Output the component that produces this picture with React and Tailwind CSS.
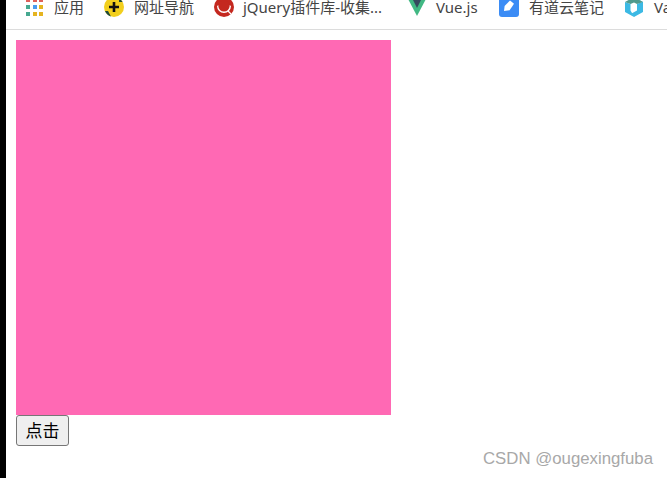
function AppsIcon() {
  const colors = ['#e0605a', '#e0605a', '#e0605a', '#46a890', '#4a9bf0', '#e5b420', '#46a890', '#e5b420', '#e5b420'];
  return (
    <div className="grid grid-cols-3 gap-x-[2.5px] gap-y-[3px] w-[17px] mt-[-1px]">
      {colors.map((c, i) => (
        <span key={i} className="w-[4px] h-[4px]" style={{ background: c }} />
      ))}
    </div>
  );
}

function NavIcon() {
  return (
    <svg width="20" height="20" viewBox="0 0 20 20">
      <circle cx="10" cy="10" r="10" fill="#f2cf1d" />
      <path d="M1 14a10 10 0 0 0 6 5.5L4 14z" fill="#1f4a38" />
      <path d="M15 1.4a10 10 0 0 1 3.6 3.6L15 5z" fill="#1f4a38" />
      <path d="M10 5v10M5 10h10" stroke="#111" strokeWidth="2.6" />
    </svg>
  );
}

function JqueryIcon() {
  return (
    <svg width="20" height="20" viewBox="0 0 20 20">
      <circle cx="10" cy="10" r="10" fill="#c4281f" />
      <path d="M3 9a7 7 0 0 0 14 0l-1.6-1a5.4 5.4 0 0 1-10.8 0z" fill="#fff" />
      <circle cx="10" cy="9" r="5.6" fill="#c4281f" />
      <path d="M14 14l3 3" stroke="#fff" strokeWidth="1.2" />
    </svg>
  );
}

function VueIcon() {
  return (
    <svg width="20" height="20" viewBox="0 0 20 20">
      <path d="M0 0h20L10 19z" fill="#41b883" />
      <path d="M4.5 0h11L10 11z" fill="#35495e" />
    </svg>
  );
}

function NoteIcon() {
  return (
    <svg width="20" height="20" viewBox="0 0 20 20">
      <rect width="20" height="20" rx="3" fill="#3b8cf5" />
      <path d="M5 14l.6-5L11 3.6l4 3.2-4.4 6.4z" fill="#fff" />
    </svg>
  );
}

function HexIcon() {
  return (
    <svg width="18" height="20" viewBox="0 0 18 20">
      <path d="M9 0l9 5v10l-9 5-2.5-3.5L12 13.5V7l5-2z" fill="#3cb9e4" />
      <path d="M0 5l5.5 2v6.5L7 16l2 4-9-5z" fill="#3cb9e4" />
      <path d="M9 0L0 5l5.5 2L9 5.5 12 7l6-2z" fill="#4f9a8d" />
    </svg>
  );
}

function Bookmark({ icon, label, className }) {
  return (
    <div className={`flex items-center shrink-0 whitespace-nowrap h-[20px] mt-[-3px] ${className}`}>
      {icon}
      <span className="text-[15px] leading-[14px] text-[#444444]">{label}</span>
    </div>
  );
}

export default function App() {
  return (
    <div className="relative flex h-[478px] w-[667px] overflow-hidden bg-white font-['Noto_Sans','Noto_Sans_CJK_SC',sans-serif]">
      <div className="w-[6px] bg-black shrink-0" />
      <div className="flex-1 min-w-0 overflow-hidden">
        {/* Bookmarks bar */}
        <div className="flex items-start h-[30px] pl-[20px] border-b border-[#dcdcdc] overflow-hidden">
          <Bookmark className="gap-[11px] w-[78px]" icon={<AppsIcon />} label="应用" />
          <Bookmark className="gap-[10px] w-[110px]" icon={<NavIcon />} label="网址导航" />
          <Bookmark className="gap-[9px] w-[193px]" icon={<JqueryIcon />} label="jQuery插件库-收集..." />
          <Bookmark className="gap-[9px] w-[92px]" icon={<VueIcon />} label="Vue.js" />
          <Bookmark className="gap-[10px] w-[126px]" icon={<NoteIcon />} label="有道云笔记" />
          <Bookmark className="gap-[11px]" icon={<HexIcon />} label="Va" />
        </div>

        {/* Page */}
        <div className="pl-[10px] pt-[10px]">
          <div className="w-[375px] h-[375px] bg-[#ff69b4]" />
          <button className="block h-[31px] w-[53px] bg-[#efefef] border border-[#767676] rounded-[3px] text-[17px] text-black leading-none">
            点击
          </button>
        </div>
      </div>

      {/* Watermark */}
      <span className="absolute left-[483px] top-[449px] text-[16.8px] leading-[20px] font-['Liberation_Sans',sans-serif] text-[#a8a8a8]">CSDN @ougexingfuba</span>
    </div>
  );
}
